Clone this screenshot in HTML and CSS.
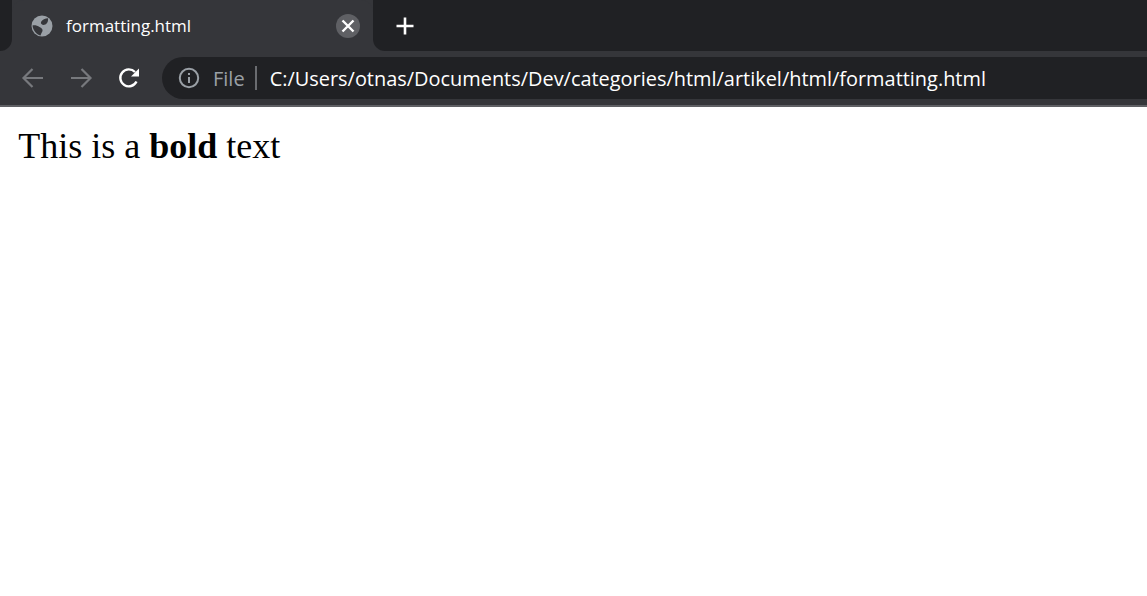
FILE: index.html
```html
<!DOCTYPE html>
<html lang="en">
<head>
  <meta charset="UTF-8" />
  <title>formatting.html</title>
  <link rel="stylesheet" href="styles.css">
</head>
<body>
  <div class="browser-chrome">
    <div class="tabstrip">
      <div class="strip-start"></div>
      <div class="tab">
        <svg class="favicon" width="22" height="22" viewBox="0 0 22 22">
          <circle cx="11" cy="11" r="10.5" fill="#9aa0a6"/>
          <path d="M17 3.2C14.500 3.200 11 4.500 10 7 9.300 9 11.500 10.200 13.500 9.800 15.500 9.400 17.500 7 17 3.2Z" fill="#35363a"/>
          <path d="M1.500 10.500C4 10 6.500 10.800 8.500 12 10.500 13.200 12 14 11.500 16 11 17.500 10 18.500 9.500 20.500 5.500 19.500 2 15.500 1.500 10.500Z" fill="#35363a"/>
        </svg>
        <span class="tab-title">formatting.html</span>
        <span class="tab-close">
          <svg width="24" height="24" viewBox="0 0 24 24">
            <path d="M6.500 6.500L17.500 17.500M17.500 6.500L6.500 17.500" stroke="#fff" stroke-width="2.400" fill="none"/>
          </svg>
        </span>
      </div>
      <div class="strip-end">
        <svg class="new-tab" width="20" height="20" viewBox="0 0 20 20">
          <path d="M10 1.500V18.500M1.500 10H18.500" stroke="#fff" stroke-width="2.600" fill="none"/>
        </svg>
      </div>
    </div>

    <div class="toolbar">
      <svg class="nav-icon" width="24" height="24" viewBox="0 0 24 24">
        <path d="M22 12H3M11.500 3L2.500 12L11.500 21" stroke="#77797d" stroke-width="2.200" fill="none"/>
      </svg>
      <svg class="nav-icon" width="24" height="24" viewBox="0 0 24 24">
        <path d="M2 12H21M12.500 3L21.500 12L12.500 21" stroke="#77797d" stroke-width="2.200" fill="none"/>
      </svg>
      <svg class="nav-icon" width="24" height="24" viewBox="0 0 24 24">
        <path d="M19.500 15.500A8.500 8.500 0 1 1 18 6" stroke="#fff" stroke-width="2.400" fill="none"/>
        <path d="M22 2.500V10.500H14Z" fill="#fff"/>
      </svg>
      <div class="omnibox">
        <svg class="info-icon" width="22" height="22" viewBox="0 0 22 22">
          <circle cx="11" cy="11" r="9.200" stroke="#9aa0a6" stroke-width="2" fill="none"/>
          <path d="M11 10V16M11 6V8" stroke="#9aa0a6" stroke-width="2" fill="none"/>
        </svg>
        <span class="scheme">File</span>
        <span class="divider"></span>
        <span class="url">C:/Users/otnas/Documents/Dev/categories/html/artikel/html/formatting.html</span>
      </div>
    </div>
  </div>

  <p class="content">This is a <b>bold</b> text</p>
</body>
</html>
```

FILE: styles.css
```css
* {
  margin: 0;
  padding: 0;
  box-sizing: border-box;
}

html,
body {
  height: 100%;
  overflow: hidden;
}

body {
  background-color: #fff;
}

.browser-chrome {
  background-color: #35363a;
  border-bottom: 2px solid #5f6064;
  font-family: "Open Sans", sans-serif;
}

.tabstrip {
  display: flex;
  height: 51px;
}

.strip-start {
  width: 12px;
  background-color: #202124;
  border-bottom-right-radius: 12px;
}

.tab {
  display: flex;
  align-items: center;
  width: 361px;
  height: 51px;
  padding: 0 13px 0 19px;
  background-color: #35363a;
  border-radius: 12px 12px 0 0;
}

.favicon {
  flex-shrink: 0;
}

.tab-title {
  flex: 1;
  margin-left: 13px;
  color: #fff;
  font-size: 17px;
}

.tab-close {
  display: flex;
  width: 24px;
  height: 24px;
  background-color: #5f6064;
  border-radius: 50%;
}

.strip-end {
  flex: 1;
  display: flex;
  align-items: center;
  padding-left: 22px;
  background-color: #202124;
  border-bottom-left-radius: 12px;
}

.toolbar {
  display: flex;
  align-items: center;
  height: 54px;
  padding: 0 0 0 21px;
}

.nav-icon {
  flex-shrink: 0;
  margin-right: 24px;
}

.omnibox {
  flex: 1;
  display: flex;
  align-items: center;
  height: 42px;
  margin-left: -3px;
  padding-left: 16px;
  background-color: #202124;
  border-radius: 21px 0 0 21px;
}

.scheme {
  margin-left: 13px;
  color: #9aa0a6;
  font-size: 20px;
}

.divider {
  width: 2px;
  height: 24px;
  margin: 0 13px 0 10px;
  background-color: #6a6c70;
}

.url {
  color: #fff;
  font-size: 19.930px;
  white-space: nowrap;
}

.content {
  margin: 18px 18px 0 18.250px;
  color: #000;
  font-family: "Liberation Serif", serif;
  font-size: 36px;
  line-height: 42px;
}
```
